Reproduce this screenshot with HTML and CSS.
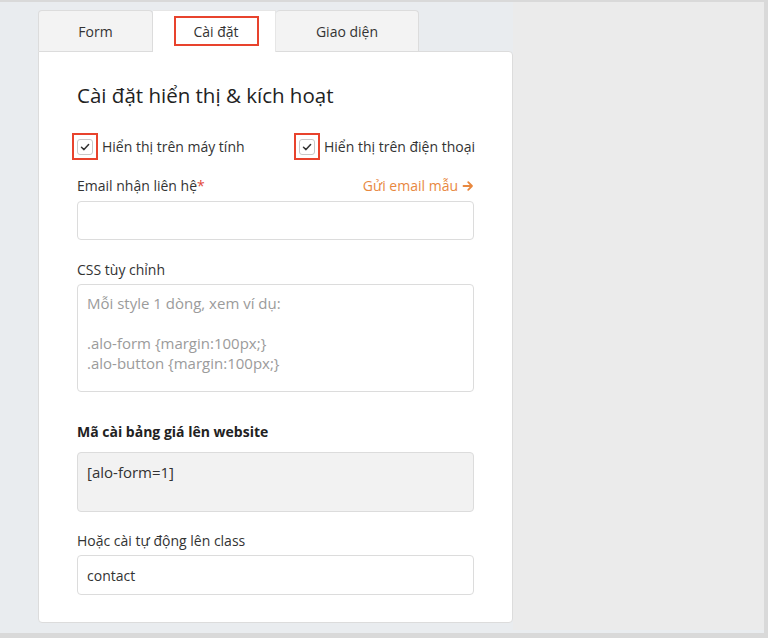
FILE: index.html
```html
<!DOCTYPE html>
<html lang="vi">
<head>
<meta charset="utf-8">
<title>Cài đặt</title>
<link rel="stylesheet" href="styles.css">
</head>
<body>
<div class="frame">
  <div class="main">
    <div class="left">
      <div class="tabs">
        <div class="tab tab-form">Form</div>
        <div class="tab tab-active"><span class="hl">Cài đặt</span></div>
        <div class="tab tab-ui">Giao diện</div>
      </div>
      <div class="card">
        <h2 class="title">Cài đặt hiển thị &amp; kích hoạt</h2>
        <div class="checks">
          <label class="check">
            <span class="hl-box"><span class="box"><svg viewBox="0 0 12 12" width="12" height="12"><path d="M2.5 6.3 L5 8.6 L9.6 3.6" fill="none" stroke="#333" stroke-width="1.5" stroke-linecap="round" stroke-linejoin="round"/></svg></span></span>
            <span class="check-text">Hiển thị trên máy tính</span>
          </label>
          <label class="check">
            <span class="hl-box"><span class="box"><svg viewBox="0 0 12 12" width="12" height="12"><path d="M2.5 6.3 L5 8.6 L9.6 3.6" fill="none" stroke="#333" stroke-width="1.5" stroke-linecap="round" stroke-linejoin="round"/></svg></span></span>
            <span class="check-text">Hiển thị trên điện thoại</span>
          </label>
        </div>
        <div class="label-row">
          <span class="label">Email nhận liên hệ<span class="req">*</span></span>
          <span class="link">Gửi email mẫu <svg class="arrow" viewBox="0 0 12 12" width="12" height="12"><path d="M1.5 6 H10 M6.2 2.2 L10 6 L6.2 9.8" fill="none" stroke="#e8883f" stroke-width="1.8" stroke-linecap="round" stroke-linejoin="round"/></svg></span>
        </div>
        <div class="input"></div>
        <div class="label gap-20">CSS tùy chỉnh</div>
        <div class="textarea">
          <div>Mỗi style 1 dòng, xem ví dụ:</div>
          <div>&nbsp;</div>
          <div>.alo-form {margin:100px;}</div>
          <div>.alo-button {margin:100px;}</div>
        </div>
        <div class="label bold gap-30">Mã cài bảng giá lên website</div>
        <div class="codebox">[alo-form=1]</div>
        <div class="label gap-19">Hoặc cài tự động lên class</div>
        <div class="input input-text">contact</div>
      </div>
    </div>
    <div class="right"></div>
  </div>
</div>
</body>
</html>
```

FILE: styles.css
```css
html, body {
  margin: 0;
  padding: 0;
}
body {
  font-family: "Open Sans", "Noto Sans", sans-serif;
  color: #333;
  background: #e9ecef;
}
.frame {
  width: 768px;
  height: 638px;
  box-sizing: border-box;
  border-top: 2px solid #d9d9d9;
  border-right: 4px solid #d9d9d9;
  border-bottom: 5px solid #d9d9d9;
  background: #e9ecef;
  display: flex;
  flex-direction: column;
}
.main {
  display: flex;
  height: 628px;
}
.left {
  width: 513px;
  box-sizing: border-box;
  padding: 8px 0 0 38px;
}
.right {
  flex: 1;
  background: #ebebeb;
}
.tabs {
  display: flex;
  height: 41px;
  position: relative;
  z-index: 1;
}
.tab {
  box-sizing: border-box;
  height: 41px;
  border: 1px solid #dcdcdc;
  border-bottom: none;
  border-radius: 4px 4px 0 0;
  background: #f3f3f3;
  display: flex;
  align-items: center;
  justify-content: center;
  font-size: 14px;
  color: #333;
}
.tab-form { width: 115px; }
.tab-active {
  width: 123px;
  background: #fff;
  border-color: #e6e6e6;
  border-left: none;
  border-radius: 0;
  height: 42px;
  padding-bottom: 1px;
}
.tab-ui { width: 143px; border-left: none; }
.hl {
  display: inline-flex;
  align-items: center;
  justify-content: center;
  box-sizing: border-box;
  width: 85px;
  height: 30px;
  border: 2px solid #e8432d;
  margin-left: 4px;
}
.card {
  width: 475px;
  box-sizing: border-box;
  height: 572px;
  background: #fff;
  border: 1px solid #dcdcdc;
  border-radius: 0 4px 4px 4px;
  padding: 29px 38px 0 38px;
}
.title {
  margin: 0;
  font-size: 20.5px;
  line-height: 28px;
  font-weight: 500;
  color: #222;
}
.checks {
  display: grid;
  grid-template-columns: 222px auto;
  margin: 24px 0 0 -5px;
  height: 27px;
}
.check {
  display: flex;
  align-items: center;
  white-space: nowrap;
}
.hl-box {
  box-sizing: border-box;
  flex: none;
  width: 26px;
  height: 27px;
  border: 2px solid #e8432d;
  display: flex;
  align-items: center;
  justify-content: center;
}
.box {
  box-sizing: border-box;
  width: 16px;
  height: 16px;
  border: 1px solid #c9c9c9;
  border-radius: 3px;
  background: #fff;
  display: flex;
  align-items: center;
  justify-content: center;
}
.check-text {
  margin-left: 4px;
  font-size: 14px;
  color: #333;
}
.label-row {
  display: flex;
  justify-content: space-between;
  margin-top: 16px;
}
.label {
  font-size: 14px;
  line-height: 20px;
  color: #333;
}
.req { color: #e2483a; }
.link {
  font-size: 14px;
  line-height: 20px;
  color: #e8883f;
  display: flex;
  align-items: center;
}
.arrow {
  margin-left: 4px;
}
.input {
  box-sizing: border-box;
  height: 39px;
  margin-top: 5px;
  border: 1px solid #dcdcdc;
  border-radius: 4px;
  background: #fff;
}
.input-text {
  height: 40px;
  margin-top: 4px;
  display: flex;
  align-items: center;
  padding-left: 9px;
  font-size: 14px;
  color: #333;
}
.gap-20 { margin-top: 20px; }
.gap-19 { margin-top: 19px; }
.gap-30 { margin-top: 30px; }
.bold { font-weight: 700; color: #222; }
.textarea {
  box-sizing: border-box;
  height: 108px;
  margin-top: 4px;
  border: 1px solid #dcdcdc;
  border-radius: 4px;
  padding: 8px 9px;
  font-size: 15px;
  line-height: 20px;
  color: #9b9b9b;
}
.codebox {
  box-sizing: border-box;
  height: 60px;
  margin-top: 10px;
  border: 1px solid #dcdcdc;
  border-radius: 4px;
  background: #f2f2f2;
  padding: 9px 9px;
  font-size: 15px;
  line-height: 20px;
  color: #333;
}
```
